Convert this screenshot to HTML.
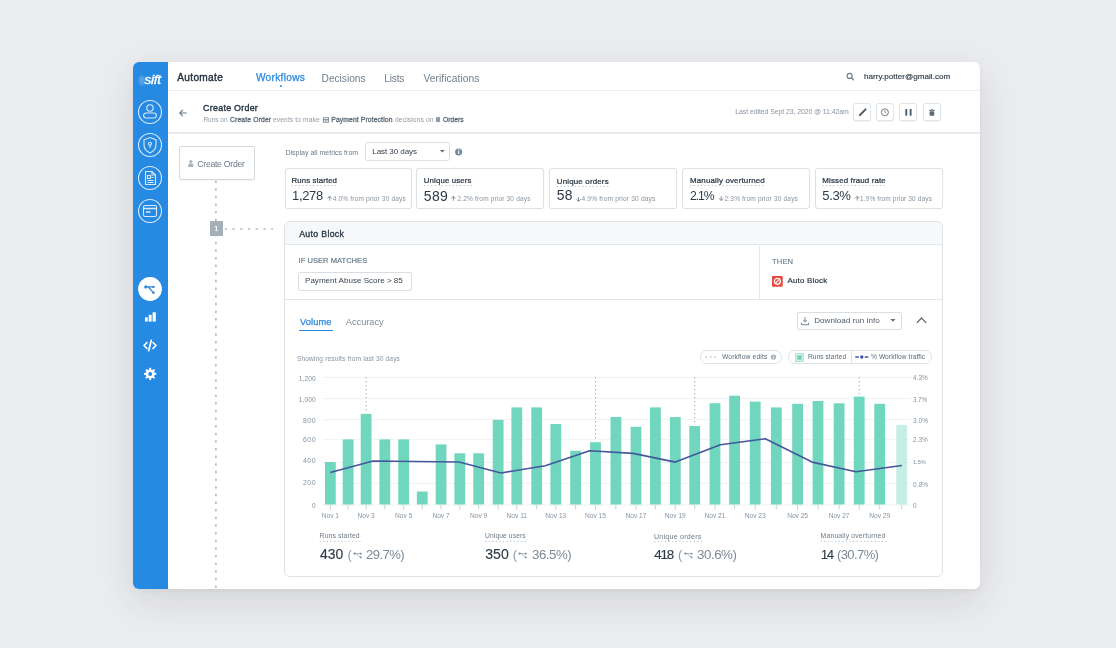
<!DOCTYPE html>
<html><head><meta charset="utf-8">
<style>
html,body{margin:0;padding:0;}
body{width:1116px;height:648px;position:relative;overflow:hidden;background:#ecedf0;font-family:"Liberation Sans",sans-serif;}
.t{position:absolute;white-space:nowrap;line-height:1;}
svg{overflow:visible;}
</style></head><body><div id="w" style="position:absolute;left:0;top:0;width:1116px;height:648px;will-change:transform">
<div style="position:absolute;left:133px;top:62px;width:847px;height:527px;background:#fff;border-radius:6px;box-shadow:0 12px 40px rgba(35,38,45,0.13),0 2px 6px rgba(35,38,45,0.05);"></div>
<div style="position:absolute;left:133px;top:62px;width:35px;height:527px;background:#278ae2;border-radius:6px 0 0 6px;"></div>
<div style="position:absolute;left:168px;top:90px;width:812px;height:1px;background:#eceff2;"></div>
<div style="position:absolute;left:168px;top:132px;width:812px;height:2px;background:#e8ebee;"></div>
<svg style="position:absolute;left:133px;top:62px" width="35" height="527" viewBox="133 62 35 527">
<g fill="none" stroke="rgba(255,255,255,0.82)" stroke-width="1.1">
<circle cx="150" cy="112" r="11.5"/>
<circle cx="150" cy="145" r="11.5"/>
<circle cx="150" cy="178" r="11.5"/>
<circle cx="150" cy="211" r="11.5"/>
<circle cx="150" cy="108" r="3.2"/>
<rect x="143.6" y="113" width="12.8" height="5" rx="2.5"/>
<path d="M150 137.5 l6 2.3 v5.2 q0 5 -6 8 q-6 -3 -6 -8 v-5.2 z"/>
<circle cx="150" cy="143.8" r="1.5"/>
<path d="M150 145.3 v2.8"/>
<path d="M145.5 171.5 h6.5 l3.5 3.5 v9.5 h-10 z"/>
<path d="M152 171.5 v3.5 h3.5"/>
<path d="M147.5 175.5 h3 v3 h-3 z M147.5 180.5 h6 M147.5 182.5 h6 M151.5 177.5 h2"/>
<rect x="143.5" y="205.5" width="13" height="11" rx="1.5"/>
<path d="M143.5 208.5 h13 M146 212 h4.5" stroke-width="1.4"/>
</g>
<circle cx="150" cy="289" r="11.9" fill="#fff"/>
<g stroke="#2a88dd" stroke-width="1.3" fill="none" stroke-linecap="round">
<path d="M146 286.9 h7.5 M148.6 287.2 L153.3 292.6"/>
</g>
<g fill="#2a88dd"><circle cx="145.8" cy="286.9" r="1.6"/><circle cx="153.5" cy="286.9" r="1.2"/><circle cx="153.5" cy="292.8" r="1.2"/></g>
<g fill="#fff">
<rect x="145" y="317.3" width="2.7" height="4.3"/>
<rect x="148.7" y="314.8" width="2.9" height="6.8"/>
<rect x="152.6" y="312.3" width="3.2" height="9.3"/>
</g>
<g stroke="#fff" stroke-width="1.7" fill="none" stroke-linecap="round" stroke-linejoin="round">
<path d="M147 342.5 l-3 3 l3 3 M153 342.5 l3 3 l-3 3 M151.3 340.3 l-2.6 10.4"/>
</g>
<path fill="#fff" fill-rule="evenodd" d="M154.58 372.85 L156.34 373.07 L156.34 374.73 L154.58 374.95 L154.04 376.25 L155.13 377.66 L153.96 378.83 L152.55 377.74 L151.25 378.28 L151.03 380.04 L149.37 380.04 L149.15 378.28 L147.85 377.74 L146.44 378.83 L145.27 377.66 L146.36 376.25 L145.82 374.95 L144.06 374.73 L144.06 373.07 L145.82 372.85 L146.36 371.55 L145.27 370.14 L146.44 368.97 L147.85 370.06 L149.15 369.52 L149.37 367.76 L151.03 367.76 L151.25 369.52 L152.55 370.06 L153.96 368.97 L155.13 370.14 L154.04 371.55 Z M152.20 373.90 A2 2 0 1 0 148.20 373.90 A2 2 0 1 0 152.20 373.90 Z"/>
</svg>
<div style="position:absolute;left:138.5px;top:76px;width:6.5px;height:8.5px;border-radius:40%;background:rgba(255,255,255,0.22);filter:blur(0.8px)"></div>
<div class="t" style="left:144.40px;top:73.18px;font-size:13.60px;color:#fff;letter-spacing:-0.260px;-webkit-text-stroke:0.4px #fff;font-style:italic;">sift</div>
<div class="t" style="left:177.30px;top:72.62px;font-size:10.13px;color:#26333f;letter-spacing:0.309px;-webkit-text-stroke:0.38px #26333f;">Automate</div>
<div class="t" style="left:255.90px;top:72.82px;font-size:10.13px;color:#2a88dd;letter-spacing:0.307px;-webkit-text-stroke:0.25px #2a88dd;">Workflows</div>
<div style="position:absolute;left:279.5px;top:85.3px;width:2.2px;height:2.2px;background:#2a88dd;border-radius:50%;"></div>
<div class="t" style="left:321.60px;top:73.97px;font-size:10.19px;color:#6e7e8d;letter-spacing:-0.022px;">Decisions</div>
<div class="t" style="left:384.20px;top:74.02px;font-size:10.12px;color:#6e7e8d;letter-spacing:-0.154px;">Lists</div>
<div class="t" style="left:423.40px;top:73.93px;font-size:10.24px;color:#6e7e8d;letter-spacing:0.067px;">Verifications</div>
<svg style="position:absolute;left:0;top:0" width="1116" height="648"><circle cx="849.6" cy="75.9" r="2.5" stroke="#6c7d8c" stroke-width="1.15" fill="none"/><path d="M851.5 77.8 L853.4 79.7" stroke="#6c7d8c" stroke-width="1.3" stroke-linecap="round"/></svg>
<div class="t" style="left:864.00px;top:72.77px;font-size:8.07px;color:#34414d;letter-spacing:0.034px;-webkit-text-stroke:0.18px #34414d;">harry.potter@gmail.com</div>
<svg style="position:absolute;left:177px;top:107px" width="12" height="12" viewBox="0 0 12 12"><path d="M9.3 6 H2.8 M5.6 3.2 L2.8 6 L5.6 8.8" stroke="#6a7a87" stroke-width="1.1" fill="none" stroke-linecap="round" stroke-linejoin="round"/></svg>
<div class="t" style="left:203.10px;top:103.68px;font-size:8.87px;color:#2a3744;letter-spacing:0.275px;-webkit-text-stroke:0.38px #2a3744;">Create Order</div>
<div class="t" style="left:203.40px;top:117.30px;font-size:6.50px;color:#8f9ba6;letter-spacing:-0.001px;">Runs on</div>
<div class="t" style="left:230.00px;top:117.06px;font-size:6.78px;color:#5d6c79;letter-spacing:0.149px;-webkit-text-stroke:0.3px #5d6c79;">Create Order</div>
<div class="t" style="left:273.00px;top:117.14px;font-size:6.69px;color:#8f9ba6;letter-spacing:0.097px;">events to make</div>
<svg style="position:absolute;left:323px;top:117px" width="6" height="6" viewBox="0 0 6 6"><rect x="0.3" y="0.8" width="5.4" height="4.4" fill="none" stroke="#5d6c79" stroke-width="0.7"/><path d="M0.5 2.5 h5 M1.5 3.8 h3" stroke="#5d6c79" stroke-width="0.7"/></svg>
<div class="t" style="left:331.30px;top:117.08px;font-size:6.75px;color:#5d6c79;letter-spacing:0.129px;-webkit-text-stroke:0.3px #5d6c79;">Payment Protection</div>
<div class="t" style="left:395.00px;top:117.11px;font-size:6.71px;color:#8f9ba6;letter-spacing:0.108px;">decisions on</div>
<div style="position:absolute;left:436.2px;top:117.2px;width:3.8px;height:5.1px;background:#8f9ba6;border-radius:0.8px;"></div>
<div class="t" style="left:442.90px;top:117.18px;font-size:6.64px;color:#5d6c79;letter-spacing:0.084px;-webkit-text-stroke:0.3px #5d6c79;">Orders</div>
<div class="t" style="left:735.30px;top:109.47px;font-size:6.88px;color:#8794a1;letter-spacing:-0.057px;">Last edited Sept 23, 2020 @ 11:42am</div>
<div style="position:absolute;left:853.2px;top:103.4px;width:17.9px;height:17.9px;box-sizing:border-box;border:1px solid #e1e5e9;border-radius:2.5px;background:#fff;box-shadow:0 0.5px 1px rgba(0,0,0,0.05);"></div>
<div style="position:absolute;left:875.7px;top:103.4px;width:17.9px;height:17.9px;box-sizing:border-box;border:1px solid #e1e5e9;border-radius:2.5px;background:#fff;box-shadow:0 0.5px 1px rgba(0,0,0,0.05);"></div>
<div style="position:absolute;left:899.3px;top:103.4px;width:17.9px;height:17.9px;box-sizing:border-box;border:1px solid #e1e5e9;border-radius:2.5px;background:#fff;box-shadow:0 0.5px 1px rgba(0,0,0,0.05);"></div>
<div style="position:absolute;left:922.9px;top:103.4px;width:17.9px;height:17.9px;box-sizing:border-box;border:1px solid #e1e5e9;border-radius:2.5px;background:#fff;box-shadow:0 0.5px 1px rgba(0,0,0,0.05);"></div>
<svg style="position:absolute;left:853px;top:103px" width="92" height="19" viewBox="853 103 92 19">
<path d="M859.9 115.1 L865.6 109.4" stroke="#4a5865" stroke-width="2" stroke-linecap="round"/>
<circle cx="884.9" cy="112.3" r="3.5" stroke="#6d7a86" stroke-width="1" fill="none"/>
<path d="M884.9 110.3 v2 l1.4 1" stroke="#6d7a86" stroke-width="0.9" fill="none"/>
<rect x="905.3" y="108.9" width="1.9" height="6.8" rx="0.5" fill="#4f5e6b"/>
<rect x="909.7" y="108.9" width="1.9" height="6.8" rx="0.5" fill="#4f5e6b"/>
<rect x="929.6" y="111.3" width="4.6" height="4.4" rx="0.4" fill="#5b6a77"/>
<rect x="929.1" y="109.8" width="5.6" height="1.0" fill="#5b6a77"/>
<rect x="931.1" y="109.1" width="1.6" height="0.8" fill="#5b6a77"/>
</svg>
<div style="position:absolute;left:179.2px;top:146.3px;width:75.8px;height:34px;box-sizing:border-box;border:1px solid #d3d9de;border-radius:2px;background:#fff;box-shadow:0 1px 1px rgba(0,0,0,0.04);"></div>
<svg style="position:absolute;left:187px;top:159px" width="8" height="9" viewBox="0 0 8 9"><circle cx="3.8" cy="2.6" r="1.5" fill="#a8b3bc"/><path d="M1.3 8 v-1.8 q0 -2 2.5 -2 q2.5 0 2.5 2 v1.8 z" fill="#a8b3bc"/></svg>
<div class="t" style="left:197.30px;top:159.65px;font-size:8.68px;color:#6b7b89;letter-spacing:-0.276px;">Create Order</div>
<svg style="position:absolute;left:0;top:0" width="1116" height="648"><path d="M215.9 180.55 V589" stroke="#b4babf" stroke-width="1.6" stroke-dasharray="2.5 5.14"/><path d="M224.7 229 H273" stroke="#b4babf" stroke-width="1.4" stroke-dasharray="2.2 5.55"/></svg>
<div style="position:absolute;left:209.9px;top:221.3px;width:12.9px;height:14.8px;background:#a4afb8;"></div>
<div class="t" style="left:213.88px;top:225.02px;font-size:8.00px;color:#fff;-webkit-text-stroke:0.15px #fff;">1</div>
<div class="t" style="left:285.40px;top:148.55px;font-size:7.03px;color:#6b7b89;letter-spacing:0.012px;">Display all metrics from</div>
<div style="position:absolute;left:365.2px;top:142.3px;width:85.3px;height:18.6px;box-sizing:border-box;border:1px solid #dbe0e5;border-radius:2.5px;background:#fff;"></div>
<div class="t" style="left:372.30px;top:148.37px;font-size:8.06px;color:#34414d;letter-spacing:-0.082px;">Last 30 days</div>
<svg style="position:absolute;left:439px;top:149px" width="7" height="5" viewBox="0 0 7 5"><path d="M0.8 1 h5 l-2.5 2.6 z" fill="#5f6f7d"/></svg>
<svg style="position:absolute;left:454px;top:147px" width="10" height="10" viewBox="0 0 10 10"><circle cx="4.6" cy="4.9" r="3.5" fill="#74899b"/><rect x="4.15" y="4.2" width="1.1" height="2.8" fill="#fff"/><circle cx="4.7" cy="3.0" r="0.65" fill="#fff"/></svg>
<div style="position:absolute;left:284.6px;top:168.4px;width:127.6px;height:40.4px;box-sizing:border-box;border:1px solid #dde2e6;border-radius:3px;background:#fff;box-shadow:0 0 1px rgba(60,70,80,0.10);"></div>
<div class="t" style="left:291.60px;top:176.89px;font-size:7.80px;color:#2a3744;letter-spacing:0.105px;-webkit-text-stroke:0.24px #2a3744;">Runs started</div>
<svg style="position:absolute;left:0;top:0" width="1116" height="648"><path d="M291.6 185.6 H338.0" stroke="#b9c1c8" stroke-width="1" stroke-dasharray="1.3 2.3"/></svg>
<div class="t" style="left:292.10px;top:189.38px;font-size:13.02px;color:#2d3b48;letter-spacing:-0.366px;">1,278</div>
<svg style="position:absolute;left:0;top:0" width="1116" height="648"><path d="M329.7 196.3 l-2.1 2.1 M329.7 196.3 l2.1 2.1 M329.7 196.6 v4" stroke="#74828f" stroke-width="0.9" fill="none"/></svg>
<div class="t" style="left:332.80px;top:195.66px;font-size:6.54px;color:#8794a0;letter-spacing:0.163px;">4.0% from prior 30 days</div>
<div style="position:absolute;left:416.2px;top:168.4px;width:127.6px;height:40.4px;box-sizing:border-box;border:1px solid #dde2e6;border-radius:3px;background:#fff;box-shadow:0 0 1px rgba(60,70,80,0.10);"></div>
<div class="t" style="left:423.80px;top:176.85px;font-size:7.85px;color:#2a3744;letter-spacing:0.133px;-webkit-text-stroke:0.24px #2a3744;">Unique users</div>
<svg style="position:absolute;left:0;top:0" width="1116" height="648"><path d="M423.8 185.6 H472.5" stroke="#b9c1c8" stroke-width="1" stroke-dasharray="1.3 2.3"/></svg>
<div class="t" style="left:423.80px;top:188.52px;font-size:14.02px;color:#2d3b48;letter-spacing:0.354px;">589</div>
<svg style="position:absolute;left:0;top:0" width="1116" height="648"><path d="M453.4 196.3 l-2.1 2.1 M453.4 196.3 l2.1 2.1 M453.4 196.6 v4" stroke="#74828f" stroke-width="0.9" fill="none"/></svg>
<div class="t" style="left:457.50px;top:195.66px;font-size:6.54px;color:#8794a0;letter-spacing:0.163px;">2.2% from prior 30 days</div>
<div style="position:absolute;left:549.3px;top:168.4px;width:127.6px;height:40.4px;box-sizing:border-box;border:1px solid #dde2e6;border-radius:3px;background:#fff;box-shadow:0 0 1px rgba(60,70,80,0.10);"></div>
<div class="t" style="left:556.80px;top:177.58px;font-size:7.93px;color:#2a3744;letter-spacing:0.174px;-webkit-text-stroke:0.24px #2a3744;">Unique orders</div>
<svg style="position:absolute;left:0;top:0" width="1116" height="648"><path d="M556.8 186.4 H609.7" stroke="#b9c1c8" stroke-width="1" stroke-dasharray="1.3 2.3"/></svg>
<div class="t" style="left:556.80px;top:189.42px;font-size:13.90px;color:#2d3b48;letter-spacing:0.338px;">58</div>
<svg style="position:absolute;left:0;top:0" width="1116" height="648"><path d="M578.5 201.4 l-2.1 -2.1 M578.5 201.4 l2.1 -2.1 M578.5 201.1 v-4" stroke="#74828f" stroke-width="0.9" fill="none"/></svg>
<div class="t" style="left:581.50px;top:196.43px;font-size:6.58px;color:#8794a0;letter-spacing:0.184px;">4.9% from prior 30 days</div>
<div style="position:absolute;left:682.3px;top:168.4px;width:127.6px;height:40.4px;box-sizing:border-box;border:1px solid #dde2e6;border-radius:3px;background:#fff;box-shadow:0 0 1px rgba(60,70,80,0.10);"></div>
<div class="t" style="left:690.00px;top:176.79px;font-size:7.93px;color:#2a3744;letter-spacing:0.165px;-webkit-text-stroke:0.24px #2a3744;">Manually overturned</div>
<svg style="position:absolute;left:0;top:0" width="1116" height="648"><path d="M690.0 185.6 H765.8" stroke="#b9c1c8" stroke-width="1" stroke-dasharray="1.3 2.3"/></svg>
<div class="t" style="left:690.00px;top:190.05px;font-size:12.22px;color:#2d3b48;letter-spacing:-1.049px;">2.1%</div>
<svg style="position:absolute;left:0;top:0" width="1116" height="648"><path d="M721.2 200.6 l-2.1 -2.1 M721.2 200.6 l2.1 -2.1 M721.2 200.3 v-4" stroke="#74828f" stroke-width="0.9" fill="none"/></svg>
<div class="t" style="left:724.50px;top:195.64px;font-size:6.56px;color:#8794a0;letter-spacing:0.175px;">2.3% from prior 30 days</div>
<div style="position:absolute;left:815.3px;top:168.4px;width:127.6px;height:40.4px;box-sizing:border-box;border:1px solid #dde2e6;border-radius:3px;background:#fff;box-shadow:0 0 1px rgba(60,70,80,0.10);"></div>
<div class="t" style="left:822.30px;top:176.80px;font-size:7.91px;color:#2a3744;letter-spacing:0.149px;-webkit-text-stroke:0.24px #2a3744;">Missed fraud rate</div>
<svg style="position:absolute;left:0;top:0" width="1116" height="648"><path d="M822.3 185.6 H886.8" stroke="#b9c1c8" stroke-width="1" stroke-dasharray="1.3 2.3"/></svg>
<div class="t" style="left:822.30px;top:189.31px;font-size:13.10px;color:#2d3b48;letter-spacing:-0.382px;">5.3%</div>
<svg style="position:absolute;left:0;top:0" width="1116" height="648"><path d="M857.2 196.3 l-2.1 2.1 M857.2 196.3 l2.1 2.1 M857.2 196.6 v4" stroke="#74828f" stroke-width="0.9" fill="none"/></svg>
<div class="t" style="left:860.00px;top:195.70px;font-size:6.49px;color:#8794a0;letter-spacing:0.140px;">1.9% from prior 30 days</div>
<div style="position:absolute;left:283.9px;top:221px;width:659px;height:356px;box-sizing:border-box;border:1px solid #dde2e7;border-radius:6px;background:#fff;"></div>
<div style="position:absolute;left:284.9px;top:222px;width:657px;height:22.2px;background:#f6f8fa;border-radius:5px 5px 0 0;border-bottom:1px solid #e1e6ea;"></div>
<div class="t" style="left:299.20px;top:229.78px;font-size:8.76px;color:#2a3744;letter-spacing:0.323px;-webkit-text-stroke:0.32px #2a3744;">Auto Block</div>
<div style="position:absolute;left:759.3px;top:245.5px;width:1px;height:54px;background:#e3e7eb;"></div>
<div style="position:absolute;left:284.9px;top:299.3px;width:657px;height:1px;background:#e3e7eb;"></div>
<div class="t" style="left:298.50px;top:257.00px;font-size:7.56px;color:#6a7d8d;letter-spacing:0.036px;-webkit-text-stroke:0.2px #6a7d8d;">IF USER MATCHES</div>
<div style="position:absolute;left:298.3px;top:271.5px;width:113.5px;height:19px;box-sizing:border-box;border:1px solid #d9dee3;border-radius:2px;background:#fff;"></div>
<div class="t" style="left:305.00px;top:277.16px;font-size:8.08px;color:#3a4855;letter-spacing:-0.013px;">Payment Abuse Score &gt; 85</div>
<div class="t" style="left:772.10px;top:257.66px;font-size:7.61px;color:#6a7d8d;letter-spacing:0.098px;-webkit-text-stroke:0.15px #6a7d8d;">THEN</div>
<svg style="position:absolute;left:772px;top:275.5px" width="11" height="11" viewBox="0 0 11 11"><rect x="0" y="0" width="10.7" height="10.7" rx="1" fill="#e8473d"/><circle cx="5.35" cy="5.35" r="3" stroke="#fff" stroke-width="1.2" fill="none"/><path d="M3.3 7.4 L7.4 3.3" stroke="#fff" stroke-width="1.2"/></svg>
<div class="t" style="left:787.50px;top:277.37px;font-size:7.95px;color:#2a3744;letter-spacing:0.187px;-webkit-text-stroke:0.2px #2a3744;">Auto Block</div>
<div style="position:absolute;left:796.6px;top:311.7px;width:105px;height:18.8px;box-sizing:border-box;border:1px solid #d9dee3;border-radius:2px;background:#fff;"></div>
<svg style="position:absolute;left:800px;top:316px" width="10" height="10" viewBox="0 0 10 10"><path d="M5 1.2 v4.6 M3.1 3.9 L5 5.8 L6.9 3.9" stroke="#6f7e8b" stroke-width="0.95" fill="none"/><path d="M1.4 6.6 v2.1 h7.2 v-2.1" stroke="#6f7e8b" stroke-width="0.95" fill="none"/></svg>
<div class="t" style="left:814.20px;top:317.47px;font-size:8.07px;color:#4a5966;letter-spacing:0.035px;">Download run info</div>
<svg style="position:absolute;left:889px;top:318px" width="8" height="5" viewBox="0 0 8 5"><path d="M1.3 1 h5.2 l-2.6 2.7 z" fill="#5f6f7d"/></svg>
<svg style="position:absolute;left:915px;top:315px" width="13" height="10" viewBox="0 0 13 10"><path d="M1.8 7.9 L6.5 3.0 L11.2 7.9" stroke="#586878" stroke-width="1.3" fill="none"/></svg>
<div class="t" style="left:300.10px;top:317.52px;font-size:9.31px;color:#2a88dd;letter-spacing:0.072px;-webkit-text-stroke:0.25px #2a88dd;">Volume</div>
<div style="position:absolute;left:298.9px;top:329.5px;width:34.4px;height:1.5px;background:#2a88dd;border-radius:1px;"></div>
<div class="t" style="left:345.80px;top:317.51px;font-size:9.32px;color:#7d8c99;letter-spacing:-0.047px;">Accuracy</div>
<div class="t" style="left:296.90px;top:355.87px;font-size:6.65px;color:#8895a1;letter-spacing:0.117px;">Showing results from last 30 days</div>
<div style="position:absolute;left:700.1px;top:350.1px;width:82.4px;height:13.6px;box-sizing:border-box;border:1px solid #dde2e7;border-radius:7px;background:#fff;"></div>
<svg style="position:absolute;left:0;top:0" width="1116" height="648"><path d="M705.6 357 h11" stroke="#8e9aa4" stroke-width="1.1" stroke-dasharray="1.3 3.2"/></svg>
<div class="t" style="left:722.00px;top:353.63px;font-size:6.69px;color:#5b6a77;letter-spacing:0.146px;">Workflow edits</div>
<svg style="position:absolute;left:770px;top:354px" width="7" height="7" viewBox="0 0 7 7"><circle cx="3.5" cy="3.1" r="2.7" fill="#a7b2bb"/><path d="M3.5 2.5 v2.2" stroke="#fff" stroke-width="0.8"/><circle cx="3.5" cy="1.6" r="0.45" fill="#fff"/></svg>
<div style="position:absolute;left:787.9px;top:350.1px;width:144px;height:13.6px;box-sizing:border-box;border:1px solid #dde2e7;border-radius:7px;background:#fff;"></div>
<div style="position:absolute;left:851.3px;top:350.6px;width:1px;height:12.6px;background:#dde2e7;"></div>
<svg style="position:absolute;left:795px;top:352.5px" width="9" height="9" viewBox="0 0 9 9"><rect x="0.5" y="0.5" width="8" height="8" fill="#d3f2ea" stroke="#9fe0cf" stroke-width="0.8"/><rect x="2.3" y="2.3" width="4.4" height="4.4" fill="#6fd2ba"/></svg>
<div class="t" style="left:808.00px;top:353.74px;font-size:6.56px;color:#5b6a77;letter-spacing:0.083px;">Runs started</div>
<svg style="position:absolute;left:0;top:0" width="1116" height="648"><path d="M855.3 357 h3.6 M864.7 357 h3.6" stroke="#3f55a3" stroke-width="1.3"/><circle cx="861.8" cy="357" r="1.7" fill="#3f55a3"/></svg>
<div class="t" style="left:871.00px;top:353.71px;font-size:6.60px;color:#5b6a77;letter-spacing:0.095px;">% Workflow traffic</div>
<svg style="position:absolute;left:0;top:0" width="1116" height="648"><path d="M322.5 377.30 H911" stroke="#eff1f3" stroke-width="1"/><path d="M322.5 398.70 H911" stroke="#eff1f3" stroke-width="1"/><path d="M322.5 419.70 H911" stroke="#eff1f3" stroke-width="1"/><path d="M322.5 439.70 H911" stroke="#eff1f3" stroke-width="1"/><path d="M322.5 462.50 H911" stroke="#eff1f3" stroke-width="1"/><path d="M322.5 483.30 H911" stroke="#eff1f3" stroke-width="1"/><path d="M322.5 505.00 H911" stroke="#eff1f3" stroke-width="1"/><rect x="324.95" y="462.00" width="10.8" height="42.50" fill="#70d6bd"/><path d="M330.35 505 V509.5" stroke="#c3cad1" stroke-width="0.9"/><rect x="342.75" y="439.40" width="10.8" height="65.10" fill="#70d6bd"/><path d="M348.15 505 V509.5" stroke="#c3cad1" stroke-width="0.9"/><rect x="360.70" y="413.90" width="10.8" height="90.60" fill="#70d6bd"/><path d="M366.10 505 V509.5" stroke="#c3cad1" stroke-width="0.9"/><rect x="379.45" y="439.40" width="10.8" height="65.10" fill="#70d6bd"/><path d="M384.85 505 V509.5" stroke="#c3cad1" stroke-width="0.9"/><rect x="398.30" y="439.40" width="10.8" height="65.10" fill="#70d6bd"/><path d="M403.70 505 V509.5" stroke="#c3cad1" stroke-width="0.9"/><rect x="416.85" y="491.50" width="10.8" height="13.00" fill="#70d6bd"/><path d="M422.25 505 V509.5" stroke="#c3cad1" stroke-width="0.9"/><rect x="435.65" y="444.40" width="10.8" height="60.10" fill="#70d6bd"/><path d="M441.05 505 V509.5" stroke="#c3cad1" stroke-width="0.9"/><rect x="454.40" y="453.30" width="10.8" height="51.20" fill="#70d6bd"/><path d="M459.80 505 V509.5" stroke="#c3cad1" stroke-width="0.9"/><rect x="473.25" y="453.30" width="10.8" height="51.20" fill="#70d6bd"/><path d="M478.65 505 V509.5" stroke="#c3cad1" stroke-width="0.9"/><rect x="492.75" y="419.80" width="10.8" height="84.70" fill="#70d6bd"/><path d="M498.15 505 V509.5" stroke="#c3cad1" stroke-width="0.9"/><rect x="511.40" y="407.40" width="10.8" height="97.10" fill="#70d6bd"/><path d="M516.80 505 V509.5" stroke="#c3cad1" stroke-width="0.9"/><rect x="531.30" y="407.40" width="10.8" height="97.10" fill="#70d6bd"/><path d="M536.70 505 V509.5" stroke="#c3cad1" stroke-width="0.9"/><rect x="550.40" y="424.00" width="10.8" height="80.50" fill="#70d6bd"/><path d="M555.80 505 V509.5" stroke="#c3cad1" stroke-width="0.9"/><rect x="570.20" y="450.80" width="10.8" height="53.70" fill="#70d6bd"/><path d="M575.60 505 V509.5" stroke="#c3cad1" stroke-width="0.9"/><rect x="590.10" y="442.20" width="10.8" height="62.30" fill="#70d6bd"/><path d="M595.50 505 V509.5" stroke="#c3cad1" stroke-width="0.9"/><rect x="610.50" y="417.00" width="10.8" height="87.50" fill="#70d6bd"/><path d="M615.90 505 V509.5" stroke="#c3cad1" stroke-width="0.9"/><rect x="630.60" y="426.80" width="10.8" height="77.70" fill="#70d6bd"/><path d="M636.00 505 V509.5" stroke="#c3cad1" stroke-width="0.9"/><rect x="650.00" y="407.40" width="10.8" height="97.10" fill="#70d6bd"/><path d="M655.40 505 V509.5" stroke="#c3cad1" stroke-width="0.9"/><rect x="669.90" y="417.10" width="10.8" height="87.40" fill="#70d6bd"/><path d="M675.30 505 V509.5" stroke="#c3cad1" stroke-width="0.9"/><rect x="689.30" y="426.00" width="10.8" height="78.50" fill="#70d6bd"/><path d="M694.70 505 V509.5" stroke="#c3cad1" stroke-width="0.9"/><rect x="709.60" y="403.20" width="10.8" height="101.30" fill="#70d6bd"/><path d="M715.00 505 V509.5" stroke="#c3cad1" stroke-width="0.9"/><rect x="729.20" y="395.70" width="10.8" height="108.80" fill="#70d6bd"/><path d="M734.60 505 V509.5" stroke="#c3cad1" stroke-width="0.9"/><rect x="749.80" y="401.60" width="10.8" height="102.90" fill="#70d6bd"/><path d="M755.20 505 V509.5" stroke="#c3cad1" stroke-width="0.9"/><rect x="770.90" y="407.40" width="10.8" height="97.10" fill="#70d6bd"/><path d="M776.30 505 V509.5" stroke="#c3cad1" stroke-width="0.9"/><rect x="792.20" y="403.80" width="10.8" height="100.70" fill="#70d6bd"/><path d="M797.60 505 V509.5" stroke="#c3cad1" stroke-width="0.9"/><rect x="812.60" y="401.00" width="10.8" height="103.50" fill="#70d6bd"/><path d="M818.00 505 V509.5" stroke="#c3cad1" stroke-width="0.9"/><rect x="833.70" y="403.30" width="10.8" height="101.20" fill="#70d6bd"/><path d="M839.10 505 V509.5" stroke="#c3cad1" stroke-width="0.9"/><rect x="853.80" y="396.60" width="10.8" height="107.90" fill="#70d6bd"/><path d="M859.20 505 V509.5" stroke="#c3cad1" stroke-width="0.9"/><rect x="874.30" y="403.80" width="10.8" height="100.70" fill="#70d6bd"/><path d="M879.70 505 V509.5" stroke="#c3cad1" stroke-width="0.9"/><rect x="896.30" y="425.00" width="10.8" height="79.50" fill="#c5eee4"/><path d="M901.70 505 V509.5" stroke="#c3cad1" stroke-width="0.9"/><path d="M366.10 377 V411.90" stroke="#9ea9b3" stroke-width="1" stroke-dasharray="1.3 2.7"/><path d="M595.50 377 V440.20" stroke="#9ea9b3" stroke-width="1" stroke-dasharray="1.3 2.7"/><path d="M694.70 377 V424.00" stroke="#9ea9b3" stroke-width="1" stroke-dasharray="1.3 2.7"/><path d="M859.20 377 V394.60" stroke="#9ea9b3" stroke-width="1" stroke-dasharray="1.3 2.7"/><polyline points="330.3,472.5 373,461 459,462 501,473 545.4,465.7 589.6,450.8 633.2,453.4 675.3,462.1 720.4,444.8 765.3,438.7 812.1,462.1 856,471.8 901.9,465.5" fill="none" stroke="#46579c" stroke-width="1.65" stroke-linejoin="round"/></svg>
<div class="t" style="left:298.70px;top:375.73px;font-size:6.58px;color:#8693a0;letter-spacing:0.111px;">1,200</div>
<div class="t" style="left:298.70px;top:397.23px;font-size:6.58px;color:#8693a0;letter-spacing:0.111px;">1,000</div>
<div class="t" style="left:303.00px;top:417.09px;font-size:6.98px;color:#8693a0;letter-spacing:0.481px;">800</div>
<div class="t" style="left:303.00px;top:435.59px;font-size:6.98px;color:#8693a0;letter-spacing:0.481px;">600</div>
<div class="t" style="left:303.00px;top:457.29px;font-size:6.98px;color:#8693a0;letter-spacing:0.481px;">400</div>
<div class="t" style="left:303.00px;top:479.29px;font-size:6.98px;color:#8693a0;letter-spacing:0.481px;">200</div>
<div class="t" style="left:312.04px;top:503.08px;font-size:6.40px;color:#8693a0;">0</div>
<div class="t" style="left:913.00px;top:374.96px;font-size:6.43px;color:#8693a0;letter-spacing:0.019px;">4.3%</div>
<div class="t" style="left:913.00px;top:396.79px;font-size:6.27px;color:#8693a0;letter-spacing:-0.098px;">3.7%</div>
<div class="t" style="left:913.00px;top:417.98px;font-size:6.51px;color:#8693a0;letter-spacing:0.086px;">3.0%</div>
<div class="t" style="left:913.00px;top:437.46px;font-size:6.43px;color:#8693a0;letter-spacing:0.019px;">2.3%</div>
<div class="t" style="left:913.00px;top:459.37px;font-size:6.05px;color:#8693a0;letter-spacing:-0.264px;">1.5%</div>
<div class="t" style="left:913.00px;top:481.97px;font-size:6.53px;color:#8693a0;letter-spacing:0.102px;">0.8%</div>
<div class="t" style="left:913.00px;top:502.98px;font-size:6.40px;color:#8693a0;">0</div>
<div class="t" style="left:321.73px;top:512.81px;font-size:6.60px;color:#8693a0;">Nov 1</div>
<div class="t" style="left:357.48px;top:512.81px;font-size:6.60px;color:#8693a0;">Nov 3</div>
<div class="t" style="left:395.08px;top:512.81px;font-size:6.60px;color:#8693a0;">Nov 5</div>
<div class="t" style="left:432.43px;top:512.81px;font-size:6.60px;color:#8693a0;">Nov 7</div>
<div class="t" style="left:470.03px;top:512.81px;font-size:6.60px;color:#8693a0;">Nov 9</div>
<div class="t" style="left:506.59px;top:512.81px;font-size:6.60px;color:#8693a0;">Nov 11</div>
<div class="t" style="left:545.35px;top:512.81px;font-size:6.60px;color:#8693a0;">Nov 13</div>
<div class="t" style="left:585.05px;top:512.81px;font-size:6.60px;color:#8693a0;">Nov 15</div>
<div class="t" style="left:625.55px;top:512.81px;font-size:6.60px;color:#8693a0;">Nov 17</div>
<div class="t" style="left:664.85px;top:512.81px;font-size:6.60px;color:#8693a0;">Nov 19</div>
<div class="t" style="left:704.55px;top:512.81px;font-size:6.60px;color:#8693a0;">Nov 21</div>
<div class="t" style="left:744.75px;top:512.81px;font-size:6.60px;color:#8693a0;">Nov 23</div>
<div class="t" style="left:787.15px;top:512.81px;font-size:6.60px;color:#8693a0;">Nov 25</div>
<div class="t" style="left:828.65px;top:512.81px;font-size:6.60px;color:#8693a0;">Nov 27</div>
<div class="t" style="left:869.25px;top:512.81px;font-size:6.60px;color:#8693a0;">Nov 29</div>
<div class="t" style="left:319.60px;top:533.41px;font-size:6.84px;color:#6b7b89;letter-spacing:0.122px;">Runs started</div>
<svg style="position:absolute;left:0;top:0" width="1116" height="648"><path d="M319.6 541.4 H360.7" stroke="#b9c1c8" stroke-width="1" stroke-dasharray="1.3 2.3"/></svg>
<div class="t" style="left:485.00px;top:533.47px;font-size:6.76px;color:#6b7b89;letter-spacing:0.087px;">Unique users</div>
<svg style="position:absolute;left:0;top:0" width="1116" height="648"><path d="M485.0 541.4 H526.8" stroke="#b9c1c8" stroke-width="1" stroke-dasharray="1.3 2.3"/></svg>
<div class="t" style="left:654.00px;top:533.22px;font-size:7.07px;color:#6b7b89;letter-spacing:0.244px;">Unique orders</div>
<svg style="position:absolute;left:0;top:0" width="1116" height="648"><path d="M654.0 541.4 H702.3" stroke="#b9c1c8" stroke-width="1" stroke-dasharray="1.3 2.3"/></svg>
<div class="t" style="left:820.60px;top:533.38px;font-size:6.88px;color:#6b7b89;letter-spacing:0.139px;">Manually overturned</div>
<svg style="position:absolute;left:0;top:0" width="1116" height="648"><path d="M820.6 541.4 H886.4" stroke="#b9c1c8" stroke-width="1" stroke-dasharray="1.3 2.3"/></svg>
<div class="t" style="left:320.10px;top:547.58px;font-size:13.95px;color:#2d3b48;letter-spacing:-0.088px;-webkit-text-stroke:0.15px #2d3b48;">430</div>
<div class="t" style="left:347.40px;top:548.39px;font-size:13.00px;color:#8a98a3;">(</div>
<svg style="position:absolute;left:0;top:0" width="1116" height="648"><g stroke="#98a5b0" stroke-width="0.8" fill="none"><path d="M354.6 553.6 h6 M356.3 553.8 L360.3 557.3"/></g><g fill="#7b8a96"><circle cx="354.6" cy="553.6" r="1.15"/><rect x="359.9" y="552.8" width="1.7" height="1.7"/><rect x="359.9" y="556.5" width="1.7" height="1.7"/></g></svg>
<div class="t" style="left:366.10px;top:548.32px;font-size:13.08px;color:#7b8a96;letter-spacing:-0.585px;">29.7%)</div>
<div class="t" style="left:485.20px;top:547.49px;font-size:14.06px;color:#2d3b48;letter-spacing:0.122px;-webkit-text-stroke:0.15px #2d3b48;">350</div>
<div class="t" style="left:512.70px;top:548.39px;font-size:13.00px;color:#8a98a3;">(</div>
<svg style="position:absolute;left:0;top:0" width="1116" height="648"><g stroke="#98a5b0" stroke-width="0.8" fill="none"><path d="M519.6 553.6 h6 M521.3 553.8 L525.3 557.3"/></g><g fill="#7b8a96"><circle cx="519.6" cy="553.6" r="1.15"/><rect x="524.9" y="552.8" width="1.7" height="1.7"/><rect x="524.9" y="556.5" width="1.7" height="1.7"/></g></svg>
<div class="t" style="left:532.00px;top:548.15px;font-size:13.28px;color:#7b8a96;letter-spacing:-0.455px;">36.5%)</div>
<div class="t" style="left:654.30px;top:548.07px;font-size:13.38px;color:#2d3b48;letter-spacing:-1.208px;-webkit-text-stroke:0.15px #2d3b48;">418</div>
<div class="t" style="left:678.10px;top:548.39px;font-size:13.00px;color:#8a98a3;">(</div>
<svg style="position:absolute;left:0;top:0" width="1116" height="648"><g stroke="#98a5b0" stroke-width="0.8" fill="none"><path d="M685.4 553.6 h6 M687.1 553.8 L691.1 557.3"/></g><g fill="#7b8a96"><circle cx="685.4" cy="553.6" r="1.15"/><rect x="690.7" y="552.8" width="1.7" height="1.7"/><rect x="690.7" y="556.5" width="1.7" height="1.7"/></g></svg>
<div class="t" style="left:697.00px;top:548.14px;font-size:13.30px;color:#7b8a96;letter-spacing:-0.445px;">30.6%)</div>
<div class="t" style="left:821.10px;top:548.72px;font-size:12.61px;color:#2d3b48;letter-spacing:-1.027px;-webkit-text-stroke:0.2px #2d3b48;">14</div>
<div class="t" style="left:836.90px;top:548.38px;font-size:13.01px;color:#7b8a96;letter-spacing:-0.576px;">(30.7%)</div>
</div></body></html>
